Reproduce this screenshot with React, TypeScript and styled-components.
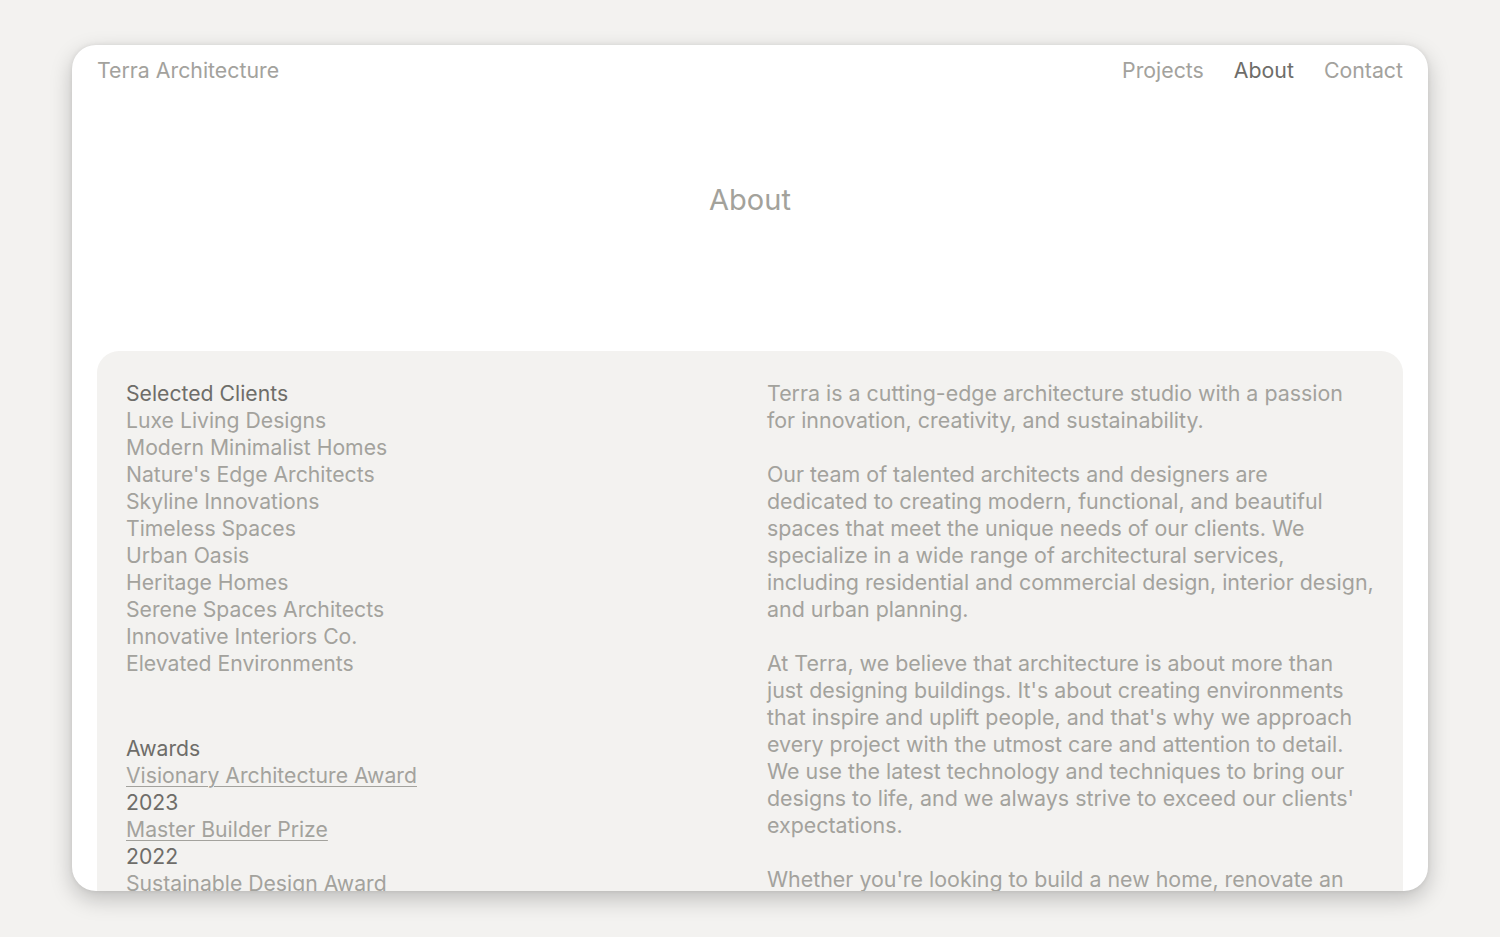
import React from "react";
import styled, { createGlobalStyle } from "styled-components";

const Global = createGlobalStyle`
  html, body { margin: 0; padding: 0; background: #f3f2f0; }
  body { font-family: Inter, "Noto Sans", sans-serif; -webkit-font-smoothing: antialiased; }
  * { box-sizing: border-box; }
`;

const Page = styled.div`
  height: 937px;
  padding: 45px 72px 46px;
`;

const Card = styled.div`
  height: 100%;
  background: #ffffff;
  border-radius: 24px;
  overflow: hidden;
  box-shadow: 0 8px 22px rgba(0, 0, 0, 0.22), 0 0 5px rgba(0, 0, 0, 0.08);
  padding: 0 25px;
`;

const Header = styled.header`
  display: flex;
  justify-content: space-between;
  align-items: center;
  padding-top: 12px;
  font-size: 21.3px;
  line-height: 27px;
`;

const Logo = styled.div`
  color: #a3a29d;
`;

const Nav = styled.nav`
  display: flex;
  gap: 30px;
`;

const NavLink = styled.a<{ $active?: boolean }>`
  color: ${(p) => (p.$active ? "#6e6d69" : "#a3a29d")};
  text-decoration: none;
`;

const Title = styled.h1`
  margin: 0;
  padding: 98px 0 0;
  height: 267px;
  text-align: center;
  font-weight: 400;
  font-size: 29px;
  line-height: 36px;
  color: #a3a29b;
`;

const Panel = styled.section`
  background: #f3f2f0;
  border-radius: 22px;
  padding: 29px 29px 40px 29px;
  display: grid;
  grid-template-columns: 1fr 1fr;
  column-gap: 34px;
  font-size: 21.2px;
  line-height: 27px;
`;

const Column = styled.div`
  display: flex;
  flex-direction: column;
`;

const TextColumn = styled(Column)`
  font-size: 21.4px;
`;

const Heading = styled.div`
  color: #6e6d69;
`;

const Item = styled.div`
  color: #a3a29d;
`;

const Group = styled.div`
  display: flex;
  flex-direction: column;
  margin-bottom: 58px;
`;

const AwardLink = styled.a`
  color: #a3a29d;
  text-decoration: underline;
  text-underline-offset: 3px;
  text-decoration-thickness: 1px;
`;

const Year = styled.div`
  color: #6e6d69;
`;

const Para = styled.p`
  margin: 0 0 27px;
  color: #a3a29d;
`;

const clients = [
  "Luxe Living Designs",
  "Modern Minimalist Homes",
  "Nature's Edge Architects",
  "Skyline Innovations",
  "Timeless Spaces",
  "Urban Oasis",
  "Heritage Homes",
  "Serene Spaces Architects",
  "Innovative Interiors Co.",
  "Elevated Environments",
];

const awards = [
  { name: "Visionary Architecture Award", year: "2023" },
  { name: "Master Builder Prize", year: "2022" },
  { name: "Sustainable Design Award", year: "2021" },
  { name: "Excellence in Innovation", year: "2020" },
];

export default function App() {
  return (
    <>
      <Global />
      <Page>
        <Card>
          <Header>
            <Logo>Terra Architecture</Logo>
            <Nav>
              <NavLink href="#">Projects</NavLink>
              <NavLink href="#" $active>
                About
              </NavLink>
              <NavLink href="#">Contact</NavLink>
            </Nav>
          </Header>
          <Title>About</Title>
          <Panel>
            <Column>
              <Group>
                <Heading>Selected Clients</Heading>
                {clients.map((c) => (
                  <Item key={c}>{c}</Item>
                ))}
              </Group>
              <Group>
                <Heading>Awards</Heading>
                {awards.map((a) => (
                  <React.Fragment key={a.name}>
                    <div>
                      <AwardLink href="#">{a.name}</AwardLink>
                    </div>
                    <Year>{a.year}</Year>
                  </React.Fragment>
                ))}
              </Group>
            </Column>
            <TextColumn>
              <Para>
                Terra is a cutting-edge architecture studio with a passion for innovation,
                creativity, and sustainability.
              </Para>
              <Para>
                Our team of talented architects and designers are dedicated to creating
                modern, functional, and beautiful spaces that meet the unique needs of our
                clients. We specialize in a wide range of architectural services, including
                residential and commercial design, interior design, and urban planning.
              </Para>
              <Para>
                At Terra, we believe that architecture is about more than just designing
                buildings. It's about creating environments that inspire and uplift people,
                and that's why we approach every project with the utmost care and attention
                to detail. We use the latest technology and techniques to bring our designs
                to life, and we always strive to exceed our clients' expectations.
              </Para>
              <Para>
                Whether you're looking to build a new home, renovate an existing space, or
                design a commercial project, Terra is here to help you bring your vision to
                life.
              </Para>
            </TextColumn>
          </Panel>
        </Card>
      </Page>
    </>
  );
}
